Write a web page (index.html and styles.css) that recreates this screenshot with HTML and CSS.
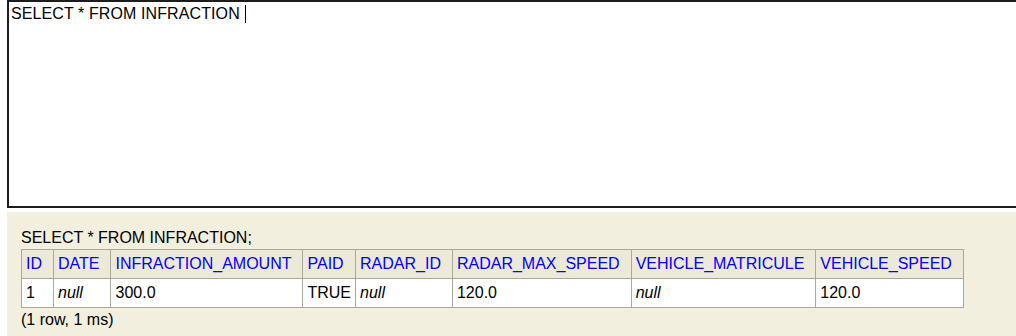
FILE: index.html
```html
<!DOCTYPE html>
<html>
	<head>
		<meta charset="UTF-8">
		<title>H2 Console</title>
		<link rel="stylesheet" href="styles.css">
	</head>
	<body>
		<div class="query">
			<div class="sql">SELECT * FROM INFRACTION <span class="caret"></span></div>
		</div>
		<div class="result">
			<div class="stmt">SELECT * FROM INFRACTION;</div>
			<table class="grid">
				<tr>
					<th>ID</th>
					<th>DATE</th>
					<th>INFRACTION_AMOUNT</th>
					<th>PAID</th>
					<th>RADAR_ID</th>
					<th>RADAR_MAX_SPEED</th>
					<th>VEHICLE_MATRICULE</th>
					<th>VEHICLE_SPEED</th>
				</tr>
				<tr>
					<td>1</td>
					<td><i>null</i></td>
					<td>300.0</td>
					<td>TRUE</td>
					<td><i>null</i></td>
					<td>120.0</td>
					<td><i>null</i></td>
					<td>120.0</td>
				</tr>
			</table>
			<div class="info">(1 row, 1 ms)</div>
		</div>
	</body>
</html>
```

FILE: styles.css
```css
*{
	margin: 0;
	padding: 0;
	box-sizing: border-box;
}
body{
	font: 16px/18px "Liberation Sans", Arial, sans-serif;
	color: #000;
	background-color: #fff;
	overflow: hidden;
}
div.query{
	margin-left: 7px;
	width: 1030px;
	height: 208px;
	border: 2px solid #1c1c1c;
	border-right: none;
}
div.query div.sql{
	padding: 3px 0 0 2px;
	white-space: nowrap;
	letter-spacing: 0.1px;
}
div.query span.caret{
	display: inline-block;
	width: 1px;
	height: 18px;
	margin-left: 1px;
	vertical-align: top;
	background-color: #000;
}
div.result{
	margin: 4px 0 0 7px;
	height: 130px;
	padding: 17px 14px 0 14px;
	background-color: #f2efdf;
}
div.result div.stmt{
	line-height: 18px;
	margin-bottom: 2px;
}
table.grid{
	border-collapse: collapse;
}
table.grid th{
	font-weight: normal;
	text-align: left;
	color: #0000ff;
	background-color: #ece9d8;
	border: 1px solid #aca899;
	padding: 5px 11px 5px 4px;
}
table.grid td{
	background-color: #fff;
	border: 1px solid #aca899;
	padding: 5px 4px 5px 4px;
}
div.result div.info{
	padding-top: 3px;
}
```
